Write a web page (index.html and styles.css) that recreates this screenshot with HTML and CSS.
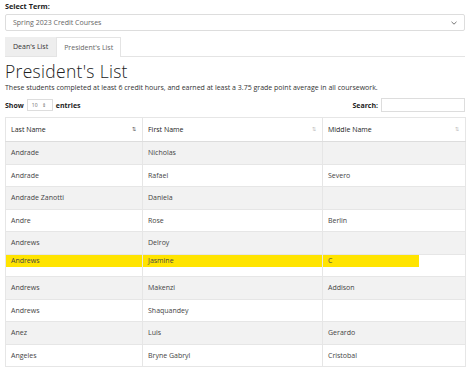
FILE: index.html
```html
<!DOCTYPE html>
<html>
<head>
<meta charset="utf-8">
<link rel="stylesheet" href="styles.css">
</head>
<body>
<div class="page">
  <label class="term-label">Select Term:</label>
  <div class="select">
    <span>Spring 2023 Credit Courses</span>
    <svg class="chev" width="6" height="4" viewBox="0 0 6 4"><path d="M0.5 0.8 L3 3.2 L5.5 0.8" fill="none" stroke="#666" stroke-width="0.9"/></svg>
  </div>
  <div class="tabs">
    <div class="tab">Dean's List</div>
    <div class="tab active">President's List</div>
    <div class="tab-fill"></div>
  </div>
  <h1>President's List</h1>
  <p class="desc">These students completed at least 6 credit hours, and earned at least a 3.75 grade point average in all coursework.</p>
  <div class="controls">
    <div class="show">Show <span class="len">10 <span class="updown">&#8661;</span></span> entries</div>
    <div class="search">Search: <span class="search-input"></span></div>
  </div>
  <table class="list">
    <thead>
      <tr><th class="c1">Last Name<span class="sort on">&#8645;</span></th><th class="c2">First Name<span class="sort">&#8645;</span></th><th class="c3">Middle Name<span class="sort">&#8645;</span></th></tr>
    </thead>
    <tbody>
      <tr class="odd"><td>Andrade</td><td>Nicholas</td><td></td></tr>
      <tr><td>Andrade</td><td>Rafael</td><td>Severo</td></tr>
      <tr class="odd"><td>Andrade Zanotti</td><td>Daniela</td><td></td></tr>
      <tr><td>Andre</td><td>Rose</td><td>Berlin</td></tr>
      <tr class="odd"><td>Andrews</td><td>Delroy</td><td></td></tr>
      <tr class="hl"><td>Andrews</td><td>Jasmine</td><td>C</td></tr>
      <tr class="odd"><td>Andrews</td><td>Makenzi</td><td>Addison</td></tr>
      <tr><td>Andrews</td><td>Shaquandey</td><td></td></tr>
      <tr class="odd"><td>Anez</td><td>Luis</td><td>Gerardo</td></tr>
      <tr><td>Angeles</td><td>Bryne Gabryl</td><td>Cristobal</td></tr>
    </tbody>
  </table>
</div>
</body>
</html>
```
FILE: styles.css
```css
* { box-sizing: border-box; }
html, body { margin: 0; padding: 0; background: #fff; }
body { font-family: "Open Sans", "Noto Sans", sans-serif; color: #333; font-size: 7px; overflow: hidden; }
.page { padding: 1px 9px 0 5px; width: 474px; }
.term-label { display: block; font-weight: 700; font-size: 7.3px; color: #222; line-height: 10px; height: 13px; }
.select { height: 17px; border: 1px solid #ddd; border-radius: 2px; display: flex; align-items: center; justify-content: space-between; padding: 0 7px 0 7px; color: #666; }
.tabs { display: flex; margin-top: 6px; height: 20px; }
.tab { padding: 0 8px; line-height: 19px; color: #333; background: #eee; border-bottom: 1px solid #e4e4e4; }
.tab.active { background: #fff; color: #666; border: 1px solid #e4e4e4; border-bottom: none; padding: 0 7px; }
.tab-fill { flex: 1; border-bottom: 1px solid #e4e4e4; }
h1 { font-size: 17.5px; font-weight: 300; color: #222; margin: 3px 0 0; line-height: 22px; letter-spacing: 0.3px; }
.desc { margin: 1px 0 0; line-height: 10px; color: #333; }
.controls { display: flex; justify-content: space-between; align-items: center; margin-top: 5px; height: 14px; font-weight: 700; color: #222; }
.show { display: flex; align-items: center; gap: 3px; }
.len { display: inline-flex; align-items: center; gap: 4px; height: 12px; width: 26px; border: 1px solid #ddd; font-size: 5px; font-weight: 400; color: #666; padding-left: 4px; }
.updown { font-size: 5px; }
.search { display: flex; align-items: center; gap: 3px; }
.search-input { display: inline-block; width: 84px; height: 14px; border: 1px solid #ddd; }
.list { width: 460px; border-collapse: collapse; margin-top: 5px; table-layout: fixed; }
.list th, .list td { border: 1px solid #e6e6e6; text-align: left; padding: 0 0 0 5px; height: 22.5px; vertical-align: middle; }
.list th { height: 24px; font-weight: 400; color: #222; position: relative; border-bottom: 1px solid #ddd; }
.list td { color: #444; }
.c1 { width: 137px; }
.c2 { width: 180px; }
.c3 { width: 143px; }
.sort { position: absolute; right: 6px; top: 8px; font-size: 5px; color: #bbb; }
.sort.on { color: #555; }
.list tr.odd td { background: #f2f2f2; }
.list tr.hl td { background: linear-gradient(#ffe400, #ffe400) no-repeat top left / 100% 12px; padding-bottom: 9px; }
.list tr.hl td:nth-child(3) { background-size: 96px 12px; }
```
